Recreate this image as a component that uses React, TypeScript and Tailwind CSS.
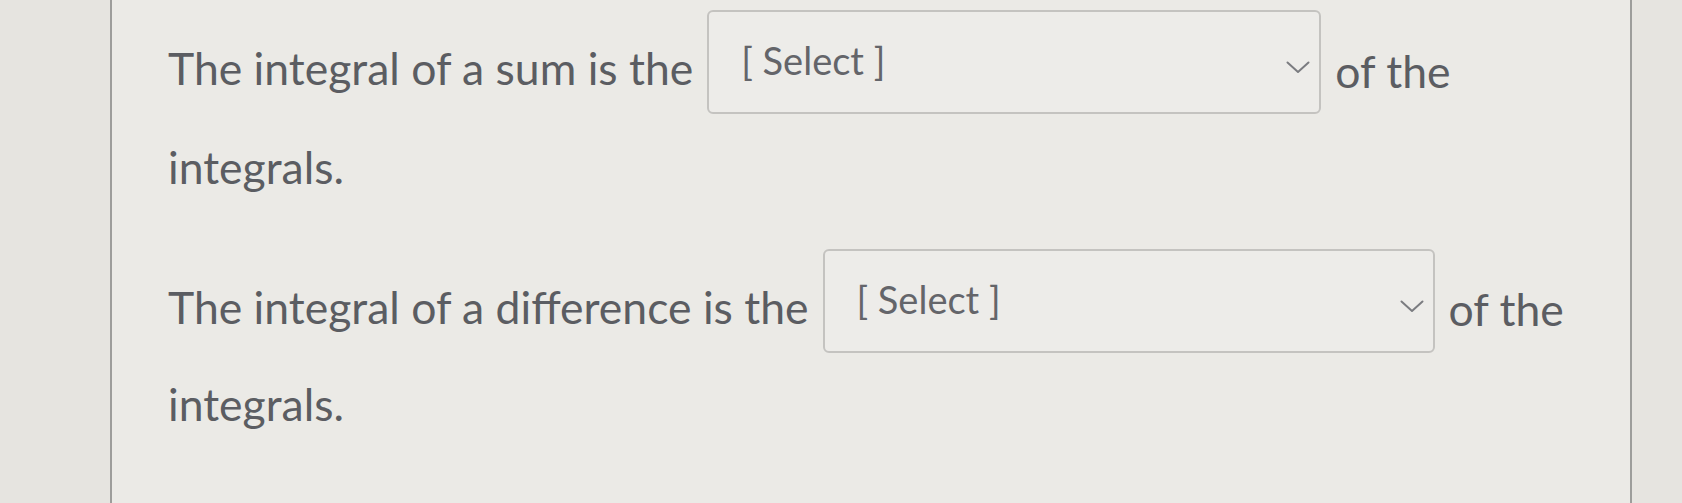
import React from 'react';

const Chevron: React.FC = () => (
  <svg width="24" height="13" viewBox="0 0 24 13" fill="none" className="shrink-0">
    <polyline points="1.5,1.5 12,11 22.5,1.5" stroke="#7b7c80" strokeWidth="2" strokeLinecap="round" strokeLinejoin="round" />
  </svg>
);

interface SelectBoxProps {
  width: string;
}

const SelectBox: React.FC<SelectBoxProps> = ({ width }) => (
  <div
    className={`${width} h-[104px] shrink-0 rounded-[6px] border-2 border-[#c4c3c0] bg-[#edece9] flex items-start justify-between pl-[32px] pr-[9px]`}
  >
    <span className="mt-[29px] text-[38px] leading-[38px] text-[#64656a] whitespace-pre">[ Select ]</span>
    <div className="mt-[49px]">
      <Chevron />
    </div>
  </div>
);

export default function App() {
  return (
    <div className="w-full h-[503px] bg-[#e7e5e1] flex font-['Lato',sans-serif] overflow-hidden">
      <div className="w-[110px] shrink-0 bg-[#e6e4e0]" />
      <div className="w-[1522px] shrink-0 border-l-2 border-r-2 border-[#9d9d9b] bg-[#ebeae6] pl-[56px] pt-[10px] text-[#5b5d62] text-[44.5px] leading-[46px]">
        <div>
          <div className="flex items-start">
            <span className="mt-[35px] whitespace-nowrap">The integral of a sum is the</span>
            <div className="ml-[14px]">
              <SelectBox width="w-[614px]" />
            </div>
            <span className="mt-[38px] ml-[14px] whitespace-nowrap">of the</span>
          </div>
          <div className="mt-[30px]">integrals.</div>
        </div>
        <div className="mt-[59px]">
          <div className="flex items-start">
            <span className="mt-[35px] whitespace-nowrap">The integral of a difference is the</span>
            <div className="ml-[14px]">
              <SelectBox width="w-[612px]" />
            </div>
            <span className="mt-[37px] ml-[14px] whitespace-nowrap">of the</span>
          </div>
          <div className="mt-[28px]">integrals.</div>
        </div>
      </div>
      <div className="flex-1 bg-[#e6e4e0]" />
    </div>
  );
}
